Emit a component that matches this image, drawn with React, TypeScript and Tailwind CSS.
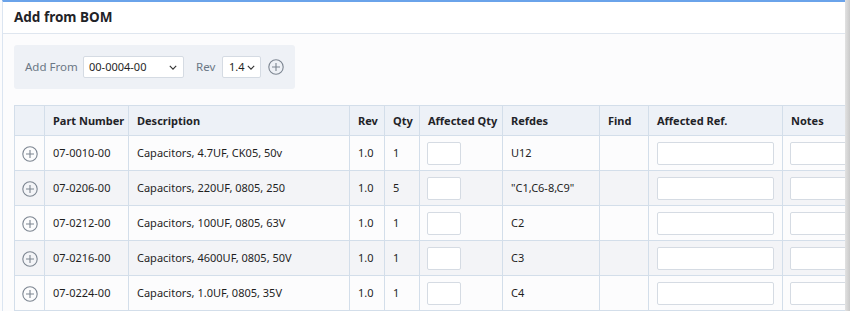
import React from "react";

const rows = [
  { pn: "07-0010-00", desc: "Capacitors, 4.7UF, CK05, 50v", rev: "1.0", qty: "1", refdes: "U12" },
  { pn: "07-0206-00", desc: "Capacitors, 220UF, 0805, 250", rev: "1.0", qty: "5", refdes: '"C1,C6-8,C9"' },
  { pn: "07-0212-00", desc: "Capacitors, 100UF, 0805, 63V", rev: "1.0", qty: "1", refdes: "C2" },
  { pn: "07-0216-00", desc: "Capacitors, 4600UF, 0805, 50V", rev: "1.0", qty: "1", refdes: "C3" },
  { pn: "07-0224-00", desc: "Capacitors, 1.0UF, 0805, 35V", rev: "1.0", qty: "1", refdes: "C4" },
];

function PlusCircle({ className = "" }: { className?: string }) {
  return (
    <svg viewBox="0 0 16 16" className={className} fill="none" stroke="currentColor" strokeWidth="1.1">
      <circle cx="8" cy="8" r="7.2" />
      <path d="M8 4v8M4 8h8" />
    </svg>
  );
}

function Chevron() {
  return (
    <svg viewBox="0 0 10 6" className="w-[8px] h-[5px]" fill="none" stroke="#333" strokeWidth="1.4">
      <path d="M1 1l4 4 4-4" />
    </svg>
  );
}

export default function App() {
  return (
    <div
      className="w-[850px] h-[311px] overflow-hidden flex bg-[#fcfcfd] text-[#1f1f1f]"
      style={{ fontFamily: '"Noto Sans", "Open Sans", sans-serif' }}
    >
      <div className="flex-1 min-w-0 border-t-2 border-t-[#6aa3ea] border-l border-l-[#dbe5f1] ml-[2px] flex flex-col">
        {/* Header */}
        <div className="h-[32px] flex items-center pl-[11px] border-b border-[#dfe6ef] bg-white">
          <h2 className="text-[13.5px] font-bold text-[#1f2328]">Add from BOM</h2>
        </div>

        <div className="pl-[11px] pt-[11px]">
          {/* Filter bar */}
          <div className="w-[281px] h-[44px] bg-[#eef1f6] rounded-[3px] flex items-center pl-[11px] whitespace-nowrap">
            <span className="text-[11.5px] text-[#6b7785] w-[58px]">Add From</span>
            <div className="w-[101px] h-[22px] bg-white border border-[#d5dbe3] rounded-[2px] flex items-center justify-between pl-[5px] pr-[6px] text-[11px]">
              <span>00-0004-00</span>
              <Chevron />
            </div>
            <span className="text-[11.5px] text-[#6b7785] ml-[12px] w-[26px]">Rev</span>
            <div className="w-[39px] h-[22px] bg-white border border-[#d5dbe3] rounded-[2px] flex items-center justify-between pl-[6px] pr-[5px] text-[11px]">
              <span>1.4</span>
              <Chevron />
            </div>
            <PlusCircle className="w-[16px] h-[16px] text-[#7c8591] ml-[7px]" />
          </div>

          {/* Table */}
          <div className="mt-[16px] overflow-hidden">
            <table className="border-collapse table-fixed text-[11px] w-[900px]">
              <colgroup>
                <col className="w-[30px]" />
                <col className="w-[84px]" />
                <col className="w-[221px]" />
                <col className="w-[35px]" />
                <col className="w-[35px]" />
                <col className="w-[83px]" />
                <col className="w-[97px]" />
                <col className="w-[49px]" />
                <col className="w-[134px]" />
                <col className="w-[132px]" />
              </colgroup>
              <thead>
                <tr className="h-[30px] bg-[#edf1f7] text-left">
                  {["", "Part Number", "Description", "Rev", "Qty", "Affected Qty", "Refdes", "Find", "Affected Ref.", "Notes"].map(
                    (h, i) => (
                      <th key={i} className="border border-[#d3deea] px-[8px] pt-[2px] font-bold text-[#1f2328] whitespace-nowrap">
                        {h}
                      </th>
                    )
                  )}
                </tr>
              </thead>
              <tbody>
                {rows.map((r, idx) => (
                  <tr key={r.pn} className={`h-[35px] ${idx % 2 === 1 ? "bg-[#f3f4f7]" : "bg-[#fcfcfd]"}`}>
                    <td className="border border-[#d3deea] text-center">
                      <PlusCircle className="w-[16px] h-[16px] text-[#7c8591] inline-block align-middle" />
                    </td>
                    <td className="border border-[#d3deea] px-[8px] whitespace-nowrap">{r.pn}</td>
                    <td className="border border-[#d3deea] px-[8px] whitespace-nowrap">{r.desc}</td>
                    <td className="border border-[#d3deea] px-[8px]">{r.rev}</td>
                    <td className="border border-[#d3deea] px-[8px]">{r.qty}</td>
                    <td className="border border-[#d3deea] px-[7px]">
                      <div className="w-[34px] h-[23px] bg-white border border-[#d5dbe3] rounded-[2px]" />
                    </td>
                    <td className="border border-[#d3deea] px-[8px] whitespace-nowrap">{r.refdes}</td>
                    <td className="border border-[#d3deea] px-[8px]"></td>
                    <td className="border border-[#d3deea] px-[8px]">
                      <div className="w-[117px] h-[23px] bg-white border border-[#d5dbe3] rounded-[2px]" />
                    </td>
                    <td className="border border-[#d3deea] px-[7px]">
                      <div className="w-[117px] h-[23px] bg-white border border-[#d5dbe3] rounded-[2px]" />
                    </td>
                  </tr>
                ))}
              </tbody>
            </table>
          </div>
        </div>
      </div>
      <div className="w-[5px] bg-gradient-to-r from-[#e2e2e2] to-[#c9c9c9]" />
    </div>
  );
}
